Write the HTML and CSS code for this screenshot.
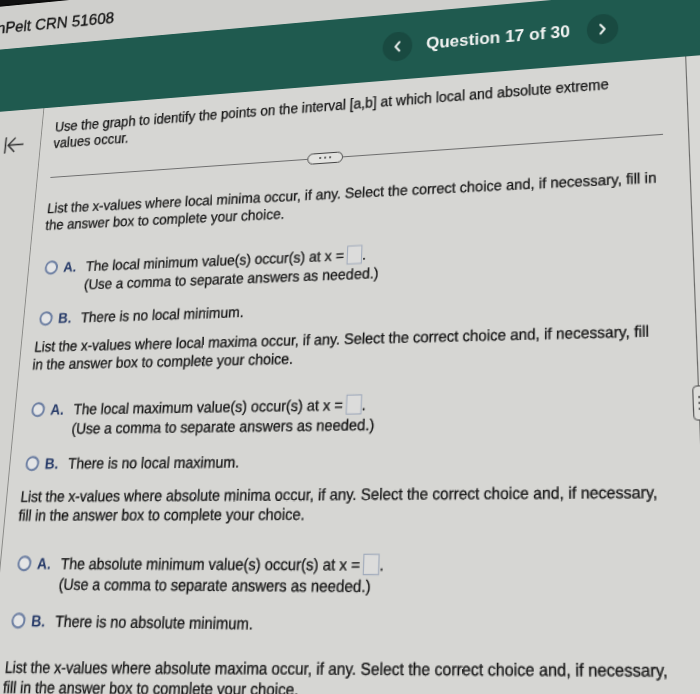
FILE: index.html
```html
<!DOCTYPE html>
<html lang="en">
<head>
<meta charset="utf-8">
<title>Question 17 of 30</title>
<link rel="stylesheet" href="styles.css">
</head>
<body>
<div class="sheet">
  <div class="topbar"><span class="crn">nPelt CRN 51608</span></div>
  <header class="qbar">
    <button class="navbtn" aria-label="Previous question">
      <svg width="8" height="12" viewBox="0 0 8 12"><polyline points="6,1.5 2,6 6,10.5" fill="none" stroke="#eef2f0" stroke-width="1.9" stroke-linecap="round" stroke-linejoin="round"/></svg>
    </button>
    <span class="qtitle">Question 17 of 30</span>
    <button class="navbtn" aria-label="Next question">
      <svg width="8" height="12" viewBox="0 0 8 12"><polyline points="2,1.5 6,6 2,10.5" fill="none" stroke="#eef2f0" stroke-width="1.9" stroke-linecap="round" stroke-linejoin="round"/></svg>
    </button>
  </header>
  <div class="body">
    <aside class="side">
      <svg width="22" height="19" viewBox="0 0 22 19"><line x1="1.5" y1="1" x2="1.5" y2="18" stroke="#333" stroke-width="1.6"/><line x1="4.5" y1="9.5" x2="21.5" y2="9.5" stroke="#333" stroke-width="1.6"/><polyline points="12,2 4.5,9.5 12,17" fill="none" stroke="#333" stroke-width="1.6"/></svg>
    </aside>
    <main class="panel">
      <p class="stem">Use the graph to identify the points on the interval [a,b] at which local and absolute extreme<br>values occur.</p>
      <div class="divider">
        <span class="rule rule-lead"></span>
        <span class="pill"><i class="dot"></i><i class="dot"></i><i class="dot"></i></span>
        <span class="rule"></span>
      </div>

      <section class="part part-first tilt-a">
        <p class="prompt">List the x-values where local minima occur, if any. Select the correct choice and, if necessary, fill in<br>the answer box to complete your choice.</p>
        <div class="choice choice-a"><span class="radio"></span><span class="letter">A.</span><span class="text">The local minimum value(s) occur(s) at x =<span class="ans"></span>.<br>(Use a comma to separate answers as needed.)</span></div>
        <div class="choice choice-b"><span class="radio"></span><span class="letter">B.</span><span class="text">There is no local minimum.</span></div>
      </section>

      <section class="part part-second tilt-b">
        <p class="prompt">List the x-values where local maxima occur, if any. Select the correct choice and, if necessary, fill<br>in the answer box to complete your choice.</p>
        <div class="choice choice-a"><span class="radio"></span><span class="letter">A.</span><span class="text">The local maximum value(s) occur(s) at x =<span class="ans"></span>.<br>(Use a comma to separate answers as needed.)</span></div>
        <div class="choice choice-b"><span class="radio"></span><span class="letter">B.</span><span class="text">There is no local maximum.</span></div>
      </section>

      <section class="part tilt-c">
        <p class="prompt">List the x-values where absolute minima occur, if any. Select the correct choice and, if necessary,<br>fill in the answer box to complete your choice.</p>
        <div class="choice choice-a"><span class="radio"></span><span class="letter">A.</span><span class="text">The absolute minimum value(s) occur(s) at x =<span class="ans"></span>.<br>(Use a comma to separate answers as needed.)</span></div>
        <div class="choice choice-b"><span class="radio"></span><span class="letter">B.</span><span class="text">There is no absolute minimum.</span></div>
      </section>

      <section class="part part-last tilt-d">
        <p class="prompt">List the x-values where absolute maxima occur, if any. Select the correct choice and, if necessary,<br>fill in the answer box to complete your choice.</p>
      </section>

      <span class="handle"><i class="dot"></i><i class="dot"></i><i class="dot"></i></span>
    </main>
    <div class="gutter"></div>
  </div>
</div>
</body>
</html>
```

FILE: styles.css
```css
html, body {
  margin: 0;
  padding: 0;
  overflow: hidden;
  background: #111;
}
body {
  width: 700px;
  height: 694px;
}
.sheet {
  width: 760px;
  height: 720px;
  background: #d6d6d3;
  display: flex;
  flex-direction: column;
  font-family: "Liberation Sans", Arial, sans-serif;
  color: #161616;
  -webkit-text-stroke: 0.25px currentColor;
  transform-origin: 0 0;
  transform: matrix3d(0.864713, -0.084066, 0, -0.00012814, -0.095378, 0.891317, 0, -0.00018984, 0, 0, 1, 0, -2.85022, 5.22655, 0, 1);
}
.topbar {
  height: 50px;
  flex: none;
  box-sizing: border-box;
  padding: 15px 0 0 3px;
  background: #cfcfcc;
  border-top: 2px solid #0c0c0c;
}
.crn {
  display: block;
  font-size: 17px;
  line-height: 20px;
  color: #141414;
  -webkit-text-stroke: 0.35px currentColor;
  white-space: nowrap;
}
.qbar {
  height: 68px;
  flex: none;
  display: flex;
  align-items: center;
  padding-left: 424px;
  background: #1f5a4f;
}
.navbtn {
  width: 30px;
  height: 30px;
  flex: none;
  border: 0;
  padding: 0;
  border-radius: 50%;
  background: #194a41;
  display: flex;
  align-items: center;
  justify-content: center;
}
.qtitle {
  margin: 0 16px 0 14px;
  font-size: 17px;
  font-weight: bold;
  color: #f1f3f2;
  -webkit-text-stroke: 0;
  white-space: nowrap;
}
.body {
  flex: 1;
  display: flex;
}
.side {
  width: 66px;
  flex: none;
  box-sizing: border-box;
  padding: 27px 0 0 25px;
  border-right: 1px solid #8a8a87;
  background: #d3d3d0;
}
.panel {
  width: 653px;
  flex: none;
  box-sizing: border-box;
  padding: 13px 0 0 14px;
  border-right: 1px solid #6a6a68;
  position: relative;
}
.gutter {
  flex: 1;
  background: #d8d8d5;
}
.stem {
  margin: 0;
  font-size: 14px;
  line-height: 17px;
  white-space: nowrap;
}
.divider {
  width: 615px;
  height: 12px;
  margin-top: 20px;
  display: flex;
  align-items: center;
}
.rule {
  flex: 1;
  height: 1px;
  background: #6f6f6f;
}
.rule-lead {
  flex: 0 0 271px;
}
.pill {
  width: 36px;
  height: 11px;
  flex: none;
  box-sizing: border-box;
  border: 1.3px solid #454545;
  border-radius: 6px;
  background: #e2e2df;
  display: flex;
  align-items: center;
  justify-content: center;
  gap: 3px;
}
.dot {
  width: 2px;
  height: 2px;
  border-radius: 50%;
  background: #3c3c3c;
}
.part {
  margin-top: 13.5px;
  transform-origin: 0 0;
}
.part-first {
  margin-top: 17.5px;
}
.part-second {
  margin-top: 10.5px;
}
.part-last {
  margin-top: 23.5px;
}
.tilt-a {
  transform: rotate(0.8deg);
}
.tilt-b {
  transform: rotate(1.05deg);
}
.tilt-c {
  transform: rotate(0.85deg);
}
.tilt-d {
  transform: rotate(0.15deg);
}
.prompt {
  margin: 0;
  font-size: 14px;
  line-height: 17px;
  white-space: nowrap;
}
.choice {
  display: flex;
  align-items: flex-start;
  font-size: 14px;
  line-height: 18px;
  white-space: nowrap;
}
.choice-a {
  margin-top: 24.5px;
}
.choice-b {
  margin-top: 14px;
}
.radio {
  width: 14px;
  height: 14px;
  flex: none;
  box-sizing: border-box;
  margin: 2px 0 0 4px;
  border: 2px solid #6d7fa2;
  border-radius: 50%;
  background: #e4e5e6;
}
.letter {
  width: 24px;
  flex: none;
  margin-left: 6px;
  font-weight: bold;
  color: #263a68;
  -webkit-text-stroke: 0;
}
.ans {
  display: inline-block;
  width: 15px;
  height: 18px;
  box-sizing: border-box;
  margin-left: 3px;
  vertical-align: -4px;
  border: 1px solid #9fa9ba;
  background: #dcdcdb;
}
.handle {
  position: absolute;
  right: -7px;
  top: 302px;
  width: 12px;
  height: 30px;
  box-sizing: border-box;
  border: 1px solid #555;
  border-radius: 4px;
  background: #dededb;
  display: flex;
  flex-direction: column;
  align-items: center;
  justify-content: center;
  gap: 3px;
}
```
